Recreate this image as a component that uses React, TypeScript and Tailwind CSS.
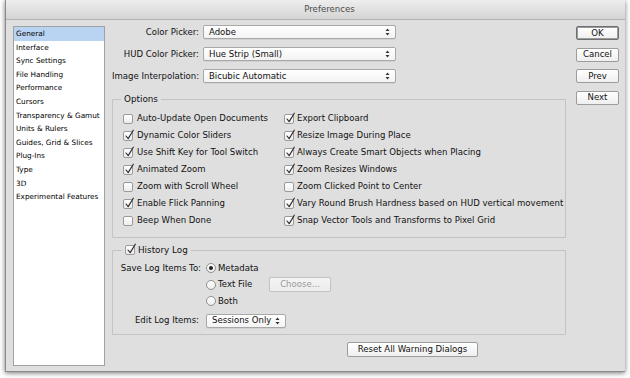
import React from "react";

const Check = ({ on }: { on: boolean }) => (
  <span className="relative inline-block w-[10px] h-[10px] shrink-0 rounded-[2px] border border-[#9a9a9a] bg-gradient-to-b from-[#ffffff] to-[#ededed]">
    {on && (
      <svg className="absolute left-[0px] top-[-3px]" width="11" height="12" viewBox="0 0 11 12">
        <path d="M2 7 L4.2 9.6 L9.3 1.2" fill="none" stroke="#2a2a2a" strokeWidth="1.15" strokeLinecap="round" strokeLinejoin="round" />
      </svg>
    )}
  </span>
);

const Radio = ({ on }: { on: boolean }) => (
  <span className="relative inline-flex items-center justify-center w-[10px] h-[10px] shrink-0 rounded-full border border-[#8f8f8f] bg-gradient-to-b from-[#ffffff] to-[#ececec]">
    {on && <span className="block w-[4px] h-[4px] rounded-full bg-[#222]" />}
  </span>
);

const Arrows = () => (
  <svg width="5" height="8" viewBox="0 0 5 8" className="shrink-0">
    <path d="M2.5 0.5 L4.5 3 L0.5 3 Z" fill="#333" />
    <path d="M2.5 7.5 L4.5 5 L0.5 5 Z" fill="#333" />
  </svg>
);

const Select = ({ value, w }: { value: string; w: string }) => (
  <div className={`${w} h-[14px] flex items-center justify-between pl-[5px] pr-[5px] rounded-[2px] border border-[#a8a8a8] bg-gradient-to-b from-[#ffffff] to-[#f3f3f3] shadow-[0_1px_0_rgba(0,0,0,0.06)]`}>
    <span className="leading-none whitespace-nowrap">{value}</span>
    <Arrows />
  </div>
);

const Btn = ({ label, cls, disabled }: { label: string; cls: string; disabled?: boolean }) => (
  <div className={`${cls} flex items-center justify-center rounded-[2px] border bg-gradient-to-b leading-none ${disabled ? "border-[#c2c2c2] from-[#f4f4f4] to-[#ececec] text-[#9a9a9a]" : "border-[#9c9c9c] from-[#ffffff] to-[#efefef] text-[#111]"}`}>
    {label}
  </div>
);

const sidebarItems = [
  "General",
  "Interface",
  "Sync Settings",
  "File Handling",
  "Performance",
  "Cursors",
  "Transparency & Gamut",
  "Units & Rulers",
  "Guides, Grid & Slices",
  "Plug-Ins",
  "Type",
  "3D",
  "Experimental Features",
];

const col1: [string, boolean][] = [
  ["Auto-Update Open Documents", false],
  ["Dynamic Color Sliders", true],
  ["Use Shift Key for Tool Switch", true],
  ["Animated Zoom", true],
  ["Zoom with Scroll Wheel", false],
  ["Enable Flick Panning", true],
  ["Beep When Done", false],
];
const col2: [string, boolean][] = [
  ["Export Clipboard", true],
  ["Resize Image During Place", true],
  ["Always Create Smart Objects when Placing", true],
  ["Zoom Resizes Windows", true],
  ["Zoom Clicked Point to Center", false],
  ["Vary Round Brush Hardness based on HUD vertical movement", true],
  ["Snap Vector Tools and Transforms to Pixel Grid", true],
];

export default function App() {
  return (
    <div className="w-[630px] h-[378px] bg-white overflow-hidden font-['DejaVu_Sans',sans-serif] text-[#111] text-[8.55px]">
      <div className="ml-[5px] w-[620px] h-[372px] bg-[#dfdfdf] flex flex-col shadow-[0_1px_5px_rgba(0,0,0,0.55)] border-l border-b border-[#8a8a8a]">
        <div className="h-[20px] shrink-0 flex items-center justify-center pl-[28px] bg-gradient-to-b from-[#eeeeee] to-[#d4d4d4] border-b border-[#b3b3b3] text-[8.6px] text-[#4c4c4c]">
          Preferences
        </div>
        <div className="flex flex-1 pl-[7px] pt-[5px] pb-[5px]">
          {/* Sidebar */}
          <div className="mt-[1px] w-[92px] h-[340px] bg-white border border-[#a2a2a2] text-[7.3px] text-[#000]">
            {sidebarItems.map((it, i) => (
              <div key={it} className={`h-[13.6px] leading-[13.6px] pl-[2px] whitespace-nowrap ${i === 0 ? "bg-[#b9d3f3]" : ""}`}>
                {it}
              </div>
            ))}
          </div>

          {/* Main */}
          <div className="ml-[7px] w-[454px] flex flex-col">
            <div className="flex flex-col gap-[8px]">
              {[
                ["Color Picker:", "Adobe"],
                ["HUD Color Picker:", "Hue Strip (Small)"],
                ["Image Interpolation:", "Bicubic Automatic"],
              ].map(([l, v]) => (
                <div key={l} className="flex items-center h-[14px]">
                  <span className="w-[87px] text-right whitespace-nowrap">{l}</span>
                  <div className="ml-[4px]">
                    <Select value={v} w="w-[193px]" />
                  </div>
                </div>
              ))}
            </div>

            <fieldset className="mt-[10px] border border-[#c3c3c3] rounded-[1px]">
              <legend className="ml-[8px] px-[3px] leading-[12px] text-[8.8px]">Options</legend>
              <div className="flex pl-[10px] pt-[5px] pb-[8px]">
                <div className="w-[161px] flex flex-col">
                  {col1.map(([t, on]) => (
                    <div key={t} className="h-[17px] flex items-center gap-[4px] whitespace-nowrap">
                      <Check on={on} />
                      <span>{t}</span>
                    </div>
                  ))}
                </div>
                <div className="flex flex-col">
                  {col2.map(([t, on]) => (
                    <div key={t} className="h-[17px] flex items-center gap-[3px] whitespace-nowrap">
                      <Check on={on} />
                      <span>{t}</span>
                    </div>
                  ))}
                </div>
              </div>
            </fieldset>

            <fieldset className="mt-[6px] border border-[#c3c3c3] rounded-[1px]">
              <legend className="ml-[9px] px-[3px] leading-[12px] text-[8.8px] flex items-center gap-[3px]">
                <Check on={true} />
                <span>History Log</span>
              </legend>
              <div className="pt-[4px] pb-[6px]">
                <div className="flex">
                  <span className="w-[88px] text-right whitespace-nowrap h-[16.5px] leading-[16.5px]">Save Log Items To:</span>
                  <div className="ml-[5px] flex flex-col">
                    <div className="h-[16.5px] flex items-center gap-[2px]">
                      <Radio on={true} />
                      <span>Metadata</span>
                    </div>
                    <div className="h-[16.5px] flex items-center">
                      <div className="w-[63px] flex items-center gap-[2px]">
                        <Radio on={false} />
                        <span>Text File</span>
                      </div>
                      <Btn label="Choose..." cls="w-[62px] h-[15px]" disabled />
                    </div>
                    <div className="h-[16.5px] flex items-center gap-[2px]">
                      <Radio on={false} />
                      <span>Both</span>
                    </div>
                  </div>
                </div>
                <div className="flex items-center mt-[4px] h-[14px]">
                  <span className="w-[86px] text-right whitespace-nowrap">Edit Log Items:</span>
                  <div className="ml-[7px]">
                    <Select value="Sessions Only" w="w-[80px]" />
                  </div>
                </div>
              </div>
            </fieldset>

            <div className="mt-[7px] ml-[235px]">
              <Btn label="Reset All Warning Dialogs" cls="w-[131px] h-[15px]" />
            </div>
          </div>

          {/* Buttons */}
          <div className="ml-[10px] mt-[1px] w-[43px] flex flex-col gap-[7.5px]">
            <div className="h-[14px] flex items-center justify-center rounded-[2px] border border-[#6f6f6f] shadow-[inset_0_0_0_1px_#9a9a9a] bg-gradient-to-b from-[#ffffff] to-[#efefef] leading-none">OK</div>
            <Btn label="Cancel" cls="h-[14px]" />
            <Btn label="Prev" cls="h-[14px]" />
            <Btn label="Next" cls="h-[14px]" />
          </div>
        </div>
      </div>
    </div>
  );
}
